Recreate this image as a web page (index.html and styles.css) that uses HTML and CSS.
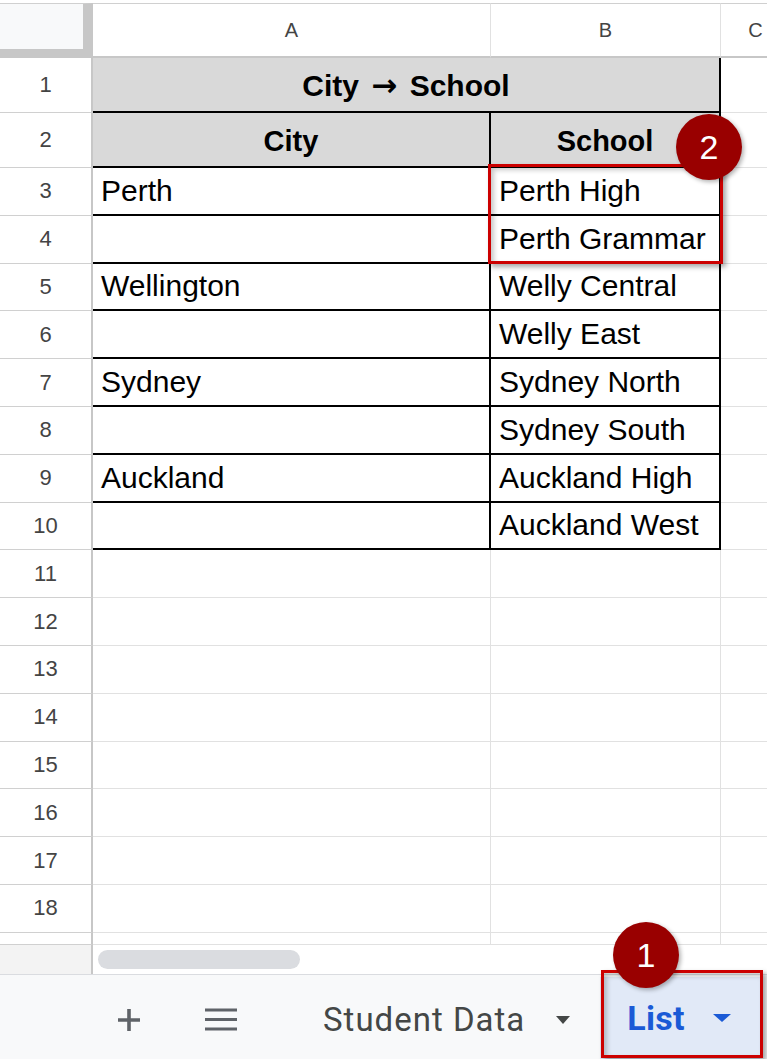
FILE: index.html
```html
<!DOCTYPE html>
<html>
<head>
<meta charset="utf-8">
<link rel="stylesheet" href="styles.css">
</head>
<body>
<div class="page">
  <div class="sheet">
    <div class="corner"></div>
    <div class="ch">A</div>
    <div class="ch">B</div>
    <div class="ch">C</div>

    <div class="rh">1</div>
    <div class="t hd title span2">City <span class="arrow">→</span> School</div>
    <div class="c"></div>

    <div class="rh">2</div>
    <div class="t hd">City</div>
    <div class="t hd">School</div>
    <div class="c"></div>

    <div class="rh">3</div>
    <div class="t">Perth</div>
    <div class="t">Perth High</div>
    <div class="c"></div>

    <div class="rh">4</div>
    <div class="t"></div>
    <div class="t">Perth Grammar</div>
    <div class="c"></div>

    <div class="rh">5</div>
    <div class="t">Wellington</div>
    <div class="t">Welly Central</div>
    <div class="c"></div>

    <div class="rh">6</div>
    <div class="t"></div>
    <div class="t">Welly East</div>
    <div class="c"></div>

    <div class="rh">7</div>
    <div class="t">Sydney</div>
    <div class="t">Sydney North</div>
    <div class="c"></div>

    <div class="rh">8</div>
    <div class="t"></div>
    <div class="t">Sydney South</div>
    <div class="c"></div>

    <div class="rh">9</div>
    <div class="t">Auckland</div>
    <div class="t">Auckland High</div>
    <div class="c"></div>

    <div class="rh">10</div>
    <div class="t"></div>
    <div class="t">Auckland West</div>
    <div class="c"></div>

    <div class="rh">11</div><div class="c"></div><div class="c"></div><div class="c"></div>
    <div class="rh">12</div><div class="c"></div><div class="c"></div><div class="c"></div>
    <div class="rh">13</div><div class="c"></div><div class="c"></div><div class="c"></div>
    <div class="rh">14</div><div class="c"></div><div class="c"></div><div class="c"></div>
    <div class="rh">15</div><div class="c"></div><div class="c"></div><div class="c"></div>
    <div class="rh">16</div><div class="c"></div><div class="c"></div><div class="c"></div>
    <div class="rh">17</div><div class="c"></div><div class="c"></div><div class="c"></div>
    <div class="rh">18</div><div class="c"></div><div class="c"></div><div class="c"></div>
    <div class="rh"></div><div class="c"></div><div class="c"></div><div class="c"></div>

    <div class="sbl"></div>
    <div class="sbr"><div class="thumb"></div></div>
  </div>

  <div class="tabs">
    <svg class="plus" width="24" height="24" viewBox="0 0 24 24"><path d="M12 1v22M1 12h22" stroke="#5f6368" stroke-width="3.6" fill="none"/></svg>
    <svg class="menu" width="32" height="24" viewBox="0 0 32 24"><path d="M0 2h32M0 11.5h32M0 21h32" stroke="#5f6368" stroke-width="3.2" fill="none"/></svg>
    <div class="tab">
      <span class="tab-name">Student Data</span>
      <span class="caret"></span>
    </div>
    <div class="tab active">
      <span class="tab-name">List</span>
      <span class="caret"></span>
    </div>
  </div>

  <div class="hl hl-cells"></div>
  <div class="hl hl-tab"></div>
  <div class="badge badge-2">2</div>
  <div class="badge badge-1">1</div>
</div>
</body>
</html>
```
FILE: styles.css
```css
* { box-sizing: border-box; }
html, body { margin: 0; padding: 0; background: #fff; }
body { width: 767px; height: 1059px; overflow: hidden; font-family: "Liberation Sans", Arial, sans-serif; }

.page { position: relative; width: 767px; height: 1059px; overflow: hidden; }

.sheet {
  display: grid;
  grid-template-columns: 93px 398px 230px 70px;
  grid-template-rows: 55px 55px 55px repeat(16, 47.8px) 12px 29px;
  width: 791px;
  padding-top: 3px;
}

.corner {
  background: #f8f9fa;
  border-top: 1px solid #d0d0d0;
  border-right: 10px solid #c7c7c7;
  border-bottom: 9px solid #c7c7c7;
}

.ch {
  display: flex; align-items: center; justify-content: center;
  border-top: 1px solid #d0d0d0;
  border-right: 1px solid #e1e1e1;
  border-bottom: 2px solid #c7c7c7;
  font-size: 20px; color: #444;
}

.rh {
  display: flex; align-items: center; justify-content: center;
  border-right: 2px solid #c7c7c7;
  border-bottom: 1px solid #d0d0d0;
  font-size: 22px; color: #444;
}

.c {
  border-right: 1px solid #e1e1e1;
  border-bottom: 1px solid #e1e1e1;
}

.t {
  display: flex; align-items: center;
  padding-left: 8px;
  border-right: 2px solid #000;
  border-bottom: 2px solid #000;
  font-size: 30px; color: #000;
  white-space: nowrap;
}

.hd {
  background: #d9d9d9;
  justify-content: center;
  padding-left: 0;
  padding-top: 3px;
  font-weight: bold;
  font-size: 29px;
  white-space: pre;
}
.title { font-size: 30px; word-spacing: 2px; }
.arrow {
  font-family: "DejaVu Sans", sans-serif;
  font-weight: bold;
  font-size: 31px;
  margin: 0 2px;
  position: relative; top: -1px;
}

.span2 { grid-column: span 2; }

.sbl {
  background: #f3f3f3;
  border-right: 2px solid #c7c7c7;
}
.sbr { grid-column: span 3; padding: 5px 0 0 5px; }
.thumb { width: 202px; height: 19px; border-radius: 10px; background: #dadce0; }

.tabs {
  display: flex; align-items: center;
  height: 85px;
  border-top: 1px solid #dadce0;
  background: #f8f9fa;
  padding-left: 117px;
  padding-top: 6px;
}
.plus { margin-right: 64px; }
.menu { margin-right: 58px; }

.tab {
  display: flex; align-items: center;
  height: 76px;
  padding: 0 30px 0 28px;
  font-family: Roboto, "Liberation Sans", sans-serif;
  font-size: 33px; font-weight: 400; color: #444746;
}
.tab-name { margin-right: 31px; letter-spacing: 1px; }
.caret {
  width: 0; height: 0;
  border-left: 7.5px solid transparent;
  border-right: 7.5px solid transparent;
  border-top: 8px solid #444746;
}
.tab.active {
  height: 82px;
  margin-top: -3px;
  background: #e1e9f7;
  color: #1a5ad6;
  font-weight: bold;
  font-size: 34px;
  padding: 0 29px 0 27px;
}
.tab.active .tab-name { margin-right: 28px; letter-spacing: 0.3px; }
.tab.active .caret { border-top-color: #1a5ad6; border-left-width: 9px; border-right-width: 9px; }

.hl {
  position: absolute;
  border: 3.5px solid #cc0000;
  box-shadow: 3px 3px 5px rgba(0,0,0,0.35), inset 3px 3px 5px rgba(0,0,0,0.22);
}
.hl-cells { left: 488px; top: 164px; width: 235px; height: 100px; }
.hl-tab { left: 601px; top: 970px; width: 162px; height: 88px; }

.badge {
  position: absolute;
  width: 66px; height: 66px; border-radius: 50%;
  background: #990000;
  color: #fff;
  display: flex; align-items: center; justify-content: center;
  font-family: "Liberation Sans", Arial, sans-serif;
  font-size: 34px;
  box-shadow: 2px 2px 4px rgba(0,0,0,0.3);
}
.badge-2 { left: 676px; top: 114px; }
.badge-1 { left: 613px; top: 922px; }
```
